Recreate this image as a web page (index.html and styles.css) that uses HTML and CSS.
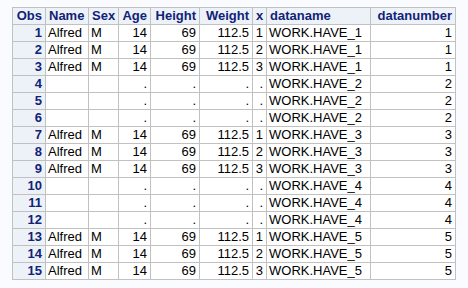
FILE: index.html
```html
<!DOCTYPE html>
<html>
<head>
<meta charset="utf-8">
<link rel="stylesheet" href="styles.css">
</head>
<body>
<table class="sas">
<colgroup>
<col class="c-obs"><col class="c-name"><col class="c-sex"><col class="c-age"><col class="c-height"><col class="c-weight"><col class="c-x"><col class="c-dn"><col class="c-num">
</colgroup>
<thead>
<tr><th class="r">Obs</th><th class="l">Name</th><th class="l">Sex</th><th class="r">Age</th><th class="r">Height</th><th class="r">Weight</th><th class="r">x</th><th class="l">dataname</th><th class="r">datanumber</th></tr>
</thead>
<tbody>
<tr><th class="r">1</th><td>Alfred</td><td>M</td><td class="r">14</td><td class="r">69</td><td class="r">112.5</td><td class="r">1</td><td>WORK.HAVE_1</td><td class="r">1</td></tr>
<tr><th class="r">2</th><td>Alfred</td><td>M</td><td class="r">14</td><td class="r">69</td><td class="r">112.5</td><td class="r">2</td><td>WORK.HAVE_1</td><td class="r">1</td></tr>
<tr><th class="r">3</th><td>Alfred</td><td>M</td><td class="r">14</td><td class="r">69</td><td class="r">112.5</td><td class="r">3</td><td>WORK.HAVE_1</td><td class="r">1</td></tr>
<tr><th class="r">4</th><td></td><td></td><td class="r">.</td><td class="r">.</td><td class="r">.</td><td class="r">.</td><td>WORK.HAVE_2</td><td class="r">2</td></tr>
<tr><th class="r">5</th><td></td><td></td><td class="r">.</td><td class="r">.</td><td class="r">.</td><td class="r">.</td><td>WORK.HAVE_2</td><td class="r">2</td></tr>
<tr><th class="r">6</th><td></td><td></td><td class="r">.</td><td class="r">.</td><td class="r">.</td><td class="r">.</td><td>WORK.HAVE_2</td><td class="r">2</td></tr>
<tr><th class="r">7</th><td>Alfred</td><td>M</td><td class="r">14</td><td class="r">69</td><td class="r">112.5</td><td class="r">1</td><td>WORK.HAVE_3</td><td class="r">3</td></tr>
<tr><th class="r">8</th><td>Alfred</td><td>M</td><td class="r">14</td><td class="r">69</td><td class="r">112.5</td><td class="r">2</td><td>WORK.HAVE_3</td><td class="r">3</td></tr>
<tr><th class="r">9</th><td>Alfred</td><td>M</td><td class="r">14</td><td class="r">69</td><td class="r">112.5</td><td class="r">3</td><td>WORK.HAVE_3</td><td class="r">3</td></tr>
<tr><th class="r">10</th><td></td><td></td><td class="r">.</td><td class="r">.</td><td class="r">.</td><td class="r">.</td><td>WORK.HAVE_4</td><td class="r">4</td></tr>
<tr><th class="r">11</th><td></td><td></td><td class="r">.</td><td class="r">.</td><td class="r">.</td><td class="r">.</td><td>WORK.HAVE_4</td><td class="r">4</td></tr>
<tr><th class="r">12</th><td></td><td></td><td class="r">.</td><td class="r">.</td><td class="r">.</td><td class="r">.</td><td>WORK.HAVE_4</td><td class="r">4</td></tr>
<tr><th class="r">13</th><td>Alfred</td><td>M</td><td class="r">14</td><td class="r">69</td><td class="r">112.5</td><td class="r">1</td><td>WORK.HAVE_5</td><td class="r">5</td></tr>
<tr><th class="r">14</th><td>Alfred</td><td>M</td><td class="r">14</td><td class="r">69</td><td class="r">112.5</td><td class="r">2</td><td>WORK.HAVE_5</td><td class="r">5</td></tr>
<tr><th class="r">15</th><td>Alfred</td><td>M</td><td class="r">14</td><td class="r">69</td><td class="r">112.5</td><td class="r">3</td><td>WORK.HAVE_5</td><td class="r">5</td></tr>
</tbody>
</table>
</body>
</html>
```
FILE: styles.css
```css
html, body {
  margin: 0;
  background: #fafbfe;
}
body {
  padding: 7px 0 0 12px;
  font-family: "Liberation Sans", Arial, sans-serif;
  font-size: 13px;
}
.sas {
  border-collapse: collapse;
  table-layout: fixed;
  width: 443px;
  background: #ffffff;
}
.c-obs { width: 33px; }
.c-name { width: 43px; }
.c-sex { width: 30px; }
.c-age { width: 32px; }
.c-height { width: 49px; }
.c-weight { width: 53px; }
.c-x { width: 14px; }
.c-dn { width: 104px; }
.c-num { width: 85px; }
.sas th, .sas td {
  border: 1px solid #c1c1c1;
  height: 16px;
  padding: 0 3px;
  line-height: 16px;
  white-space: nowrap;
  overflow: hidden;
  box-sizing: border-box;
}
.sas td {
  color: #000000;
  text-align: left;
  padding-left: 2px;
}
.sas th {
  background: #edf2f9;
  color: #112277;
  font-weight: bold;
  text-align: left;
}
.sas .r { text-align: right; }
.sas td.r { padding-right: 3px; }
```
